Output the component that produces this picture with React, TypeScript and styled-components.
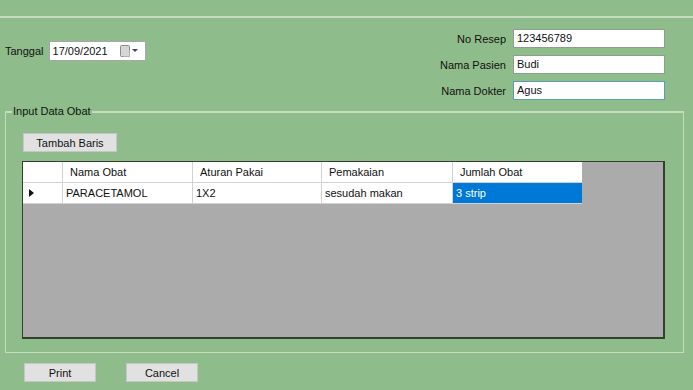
import React from 'react';
import styled, { createGlobalStyle } from 'styled-components';

const GlobalStyle = createGlobalStyle`
  html, body {
    margin: 0;
    padding: 0;
    background: #8fbc8b;
  }
  body {
    font-family: "Liberation Sans", Arial, sans-serif;
    font-size: 11px;
    color: #111;
  }
`;

const columns = ['Nama Obat', 'Aturan Pakai', 'Pemakaian', 'Jumlah Obat'];
const rows = [['PARACETAMOL', '1X2', 'sesudah makan', '3 strip']];

function App() {
  return (
    <>
      <GlobalStyle />
      <Form>
        <TopStrip />
        <Header>
          <DateRow>
            <Label>Tanggal</Label>
            <DatePicker>
              <span>17/09/2021</span>
              <svg width="20" height="14" viewBox="0 0 20 14">
                <rect x="1.5" y="1.5" width="9" height="11" rx="1" fill="#d6d6d6" stroke="#8c8c8c" />
                <path d="M4 12.5 L10.5 12.5 L10.5 6" stroke="#b0b0b0" fill="none" />
                <path d="M13 5 L19 5 L16 8 Z" fill="#3c4a6a" />
              </svg>
            </DatePicker>
          </DateRow>
          <Fields>
            <FieldLabel>No Resep</FieldLabel>
            <TextBox>123456789</TextBox>
            <FieldLabel>Nama Pasien</FieldLabel>
            <TextBox>Budi</TextBox>
            <FieldLabel>Nama Dokter</FieldLabel>
            <TextBox $focused>Agus</TextBox>
          </Fields>
        </Header>
        <Group>
          <Legend>Input Data Obat</Legend>
          <GroupBody>
            <Button $width={94}>Tambah Baris</Button>
            <GridView>
              <Table>
                <HeadCell />
                {columns.map((c) => (
                  <HeadCell key={c}>{c}</HeadCell>
                ))}
                {rows.map((r, i) => (
                  <React.Fragment key={i}>
                    <RowHead>
                      <svg width="6" height="8" viewBox="0 0 6 8">
                        <path d="M0 0 L5 4 L0 8 Z" fill="#111" />
                      </svg>
                    </RowHead>
                    {r.map((v, j) => (
                      <Cell key={j} $selected={j === r.length - 1}>
                        {v}
                      </Cell>
                    ))}
                  </React.Fragment>
                ))}
              </Table>
            </GridView>
          </GroupBody>
        </Group>
        <Footer>
          <Button $width={72}>Print</Button>
          <Button $width={72}>Cancel</Button>
        </Footer>
      </Form>
    </>
  );
}

export default App;

const Form = styled.div`
  width: 693px;
  height: 390px;
  overflow: hidden;
  display: flex;
  flex-direction: column;
`;

const TopStrip = styled.div`
  height: 16px;
  border-bottom: 2px solid #c4dcc0;
  flex-shrink: 0;
`;

const Header = styled.div`
  display: flex;
  justify-content: space-between;
  align-items: flex-start;
  height: 87px;
  flex-shrink: 0;
  padding: 0 28px 0 5px;
`;

const DateRow = styled.div`
  display: flex;
  align-items: center;
  gap: 5px;
  margin-top: 23px;
`;

const Label = styled.span`
  line-height: 20px;
`;

const DatePicker = styled.div`
  width: 97px;
  height: 20px;
  box-sizing: border-box;
  background: #fff;
  border: 1px solid #a7a7a7;
  display: flex;
  align-items: center;
  justify-content: space-between;
  padding: 0 6px 0 3px;
  svg {
    display: block;
  }
`;

const Fields = styled.div`
  display: grid;
  grid-template-columns: auto 152px;
  column-gap: 7px;
  row-gap: 7px;
  margin-top: 11px;
  align-items: center;
`;

const FieldLabel = styled.span`
  text-align: right;
`;

const TextBox = styled.div<{ $focused?: boolean }>`
  height: 19px;
  box-sizing: border-box;
  background: #fff;
  border: 1px solid ${(p) => (p.$focused ? '#5e9cb4' : '#8e9e8c')};
  padding: 0 3px;
  line-height: 17px;
`;

const Group = styled.fieldset`
  margin: 0 9px 0 5px;
  border: 1px solid #c4dcc0;
  border-width: 2px 1px 1px 1px;
  padding: 0;
  height: 248px;
  box-sizing: border-box;
  flex-shrink: 0;
`;

const Legend = styled.legend`
  padding: 0 1px;
  margin-left: 6px;
  line-height: 13px;
`;

const GroupBody = styled.div`
  display: flex;
  flex-direction: column;
  align-items: flex-start;
  gap: 9px;
  padding: 15px 18px 0 17px;
`;

const Button = styled.div<{ $width: number }>`
  width: ${(p) => p.$width}px;
  height: 19px;
  box-sizing: border-box;
  background: #e1e1e1;
  border: 1px solid #c6c6c6;
  display: flex;
  align-items: center;
  justify-content: center;
  flex-shrink: 0;
`;

const GridView = styled.div`
  align-self: stretch;
  margin-left: -1px;
  height: 178px;
  box-sizing: border-box;
  background: #ababab;
  border: 1px solid #34402f;
  border-width: 1px 2px 2px 1px;
  overflow: hidden;
`;

const Table = styled.div`
  display: grid;
  grid-template-columns: 39px 129px 128px 130px 129px;
  grid-auto-rows: 20px;
  gap: 1px;
  width: max-content;
  background: #d2d2d2;
  padding-bottom: 1px;
`;

const HeadCell = styled.div`
  background: #fff;
  padding-left: 7px;
  line-height: 20px;
  white-space: nowrap;
`;

const RowHead = styled.div`
  background: #fff;
  display: flex;
  align-items: center;
  padding-left: 6px;
`;

const Cell = styled.div<{ $selected?: boolean }>`
  background: ${(p) => (p.$selected ? '#0078d7' : '#fff')};
  color: ${(p) => (p.$selected ? '#fff' : '#111')};
  padding-left: 3px;
  line-height: 20px;
  white-space: nowrap;
`;

const Footer = styled.div`
  display: flex;
  gap: 30px;
  padding: 10px 0 0 24px;
`;
